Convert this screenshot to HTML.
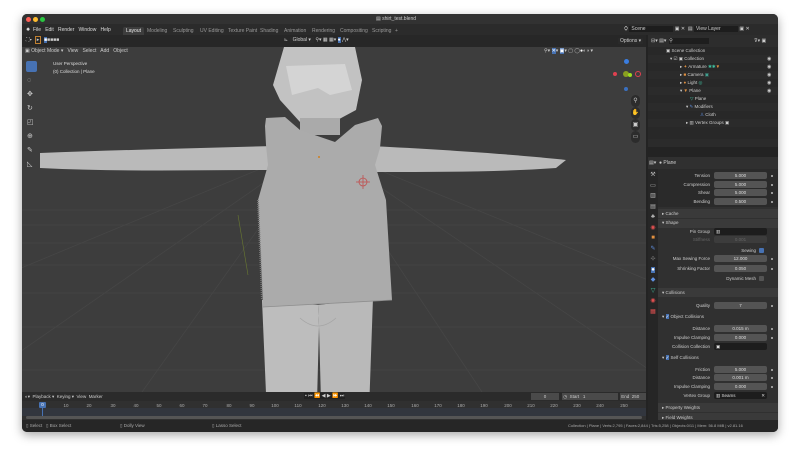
<!DOCTYPE html>
<html><head><meta charset="utf-8"><style>
*{margin:0;padding:0;box-sizing:border-box}
body{width:800px;height:459px;background:#fff;position:relative;overflow:hidden;font-family:"Liberation Sans",sans-serif;color:#ccc;font-size:5px}
.a{position:absolute;white-space:nowrap}
#win{position:absolute;left:22px;top:14px;width:756px;height:418px;background:#232323;border-radius:5px;overflow:hidden;box-shadow:0 3px 10px rgba(0,0,0,.35)}
.tab{position:absolute;top:13px;height:9px;line-height:9px;font-size:5px;color:#999}
.lab{position:absolute;width:80px;text-align:right;font-size:4.5px;color:#ccc;line-height:7px}
.fld{position:absolute;left:692px;width:53px;height:7px;background:#545454;border-radius:2px;text-align:center;font-size:4.5px;line-height:7px;color:#ddd}
.dot{position:absolute;left:749px;width:2px;height:2px;background:#bbb;border-radius:1px}
.sec{position:absolute;left:640px;font-size:4.5px;color:#ccc}
.orow{position:absolute;left:626px;width:130px;height:8px;font-size:4.5px;line-height:8px;color:#ccc}
.num{position:absolute;top:389px;font-size:4.5px;color:#aaa;width:14px;text-align:center}
</style></head><body>
<div id="win">
 <div class="a" style="left:0;top:0;width:756px;height:10px;background:#323232"></div>
 <div class="a" style="left:4px;top:3px;width:5px;height:5px;border-radius:3px;background:#fe5f57"></div>
 <div class="a" style="left:11px;top:3px;width:5px;height:5px;border-radius:3px;background:#febc2e"></div>
 <div class="a" style="left:18px;top:3px;width:5px;height:5px;border-radius:3px;background:#28c840"></div>
 <div class="a" style="left:354px;top:2px;font-size:5px;color:#ccc">▤ shirt_test.blend</div>
 <div class="a" style="left:0;top:10px;width:756px;height:11px;background:#2b2b2b"></div>
 <div class="a" style="left:4px;top:13px;font-size:5px;color:#ddd">✹ &nbsp;File &nbsp; Edit &nbsp; Render &nbsp; Window &nbsp; Help</div>
 <div class="tab" style="left:101px;background:#3d3d3d;color:#eee;padding:0 3px;border-radius:2px 2px 0 0">Layout</div>
 <div class="tab" style="left:125px">Modeling</div><div class="tab" style="left:151px">Sculpting</div>
 <div class="tab" style="left:178px">UV Editing</div><div class="tab" style="left:206px">Texture Paint</div>
 <div class="tab" style="left:238px">Shading</div><div class="tab" style="left:262px">Animation</div>
 <div class="tab" style="left:290px">Rendering</div><div class="tab" style="left:318px">Compositing</div>
 <div class="tab" style="left:350px">Scripting</div><div class="tab" style="left:373px">+</div>
 <div class="a" style="left:602px;top:12px;font-size:5px;color:#ccc">⛭ <span style="display:inline-block;width:44px;background:#1d1d1d;padding-left:2px">Scene</span> ▣ ✕ &nbsp;▤ <span style="display:inline-block;width:44px;background:#1d1d1d;padding-left:2px">View Layer</span> ▣ ✕</div>
 <div class="a" style="left:0;top:21px;width:624px;height:357px;background:#3d3d3d;overflow:hidden">
  <svg width="624" height="357" style="position:absolute;left:0;top:0">
   <g stroke="#464646" stroke-width="0.8" fill="none">
    <line x1="0" y1="175" x2="624" y2="175"/><line x1="0" y1="190" x2="624" y2="190"/>
    <line x1="0" y1="208" x2="624" y2="208"/><line x1="0" y1="230" x2="624" y2="230"/>
    <line x1="0" y1="258" x2="624" y2="258"/><line x1="0" y1="292" x2="624" y2="292"/>
    <line x1="0" y1="335" x2="624" y2="335"/>
    <line x1="296" y1="110" x2="-300" y2="357"/><line x1="296" y1="110" x2="-60" y2="357"/>
    <line x1="296" y1="110" x2="120" y2="357"/><line x1="296" y1="110" x2="460" y2="357"/>
    <line x1="296" y1="110" x2="660" y2="357"/><line x1="296" y1="110" x2="900" y2="357"/>
   </g>
   <line x1="216" y1="180" x2="226" y2="240" stroke="#6a7a30" stroke-width="0.6"/>
  </svg>
  <svg width="624" height="357" style="position:absolute;left:0;top:0">
   <g transform="translate(-22,-35)">
    <path d="M262 300 L318 305 L319 326 L316 440 L268 440 Z" fill="#bdbdbd"/>
    <path d="M318 305 L373 298 L368 440 L322 440 L319 326 Z" fill="#b9b9b9"/>
    <path d="M300 318 Q318 334 336 318" stroke="#a5a5a5" stroke-width="0.8" fill="none"/>
    <path d="M40 153 C120 150 200 148 275 146 L275 170 C200 170 120 172 40 168 Z" fill="#bababa"/>
    <path d="M370 146 C450 150 520 155 566 160 L556 168 C500 172 440 172 375 172 Z" fill="#bababa"/>
    <path d="M284 47 L355 47 L362 80 L356 110 L330 124 L300 122 L280 100 L273 85 Z" fill="#c2c2c2"/>
    <path d="M286 66 L345 64 L352 90 L330 95 L318 88 L292 95 Z" fill="#d4d4d4"/>
    <path d="M300 118 L340 118 L340 135 L300 135 Z" fill="#aaaaaa"/>
    <path d="M265 126 L266 118 L285 117 L300 130 L335 142 L355 125 L378 118 L382 126 L380 148 L375 165 L386 200 L392 300 L263 307 L258 200 L268 165 L266 145 Z" fill="#ababab"/>
    <path d="M263 307 L392 300" stroke="#8e8e8e" stroke-width="0.8"/>
    <path d="M258 200 L262 300" stroke="#777" stroke-width="2" stroke-dasharray="1 1"/>
    <circle cx="319" cy="157" r="1" fill="#d08020"/>
    <g stroke="#c05050" stroke-width="0.8" fill="none"><circle cx="363" cy="182" r="4"/><line x1="363" y1="175" x2="363" y2="189"/><line x1="356" y1="182" x2="370" y2="182"/></g>
   </g>
  </svg>
 </div>
 <div class="a" style="left:0;top:21px;width:624px;height:12px;background:rgba(35,35,35,.85)"></div>
 <div class="a" style="left:4px;top:23px;font-size:5px;color:#ccc">⛶▾ &nbsp;<span style="border:1px solid #c08030;padding:0 1px">▸</span> &nbsp;<span style="background:#4772b3;color:#fff">■</span>■■■■</div>
 <div class="a" style="left:262px;top:23px;font-size:5px;color:#ccc">⊾ <span style="background:#2a2a2a;padding:0 3px">Global ▾</span> ⚲▾ ▦ ▦▾ <span style="background:#4772b3;color:#fff">●</span> ⋀▾</div>
 <div class="a" style="left:596px;top:24px;font-size:5px;background:#2a2a2a;padding:0 2px">Options ▾</div>
 <div class="a" style="left:3px;top:34px;font-size:5px;color:#ccc">▣ Object Mode ▾ &nbsp; View &nbsp; Select &nbsp; Add &nbsp; Object</div>
 <div class="a" style="left:522px;top:34px;font-size:5px;color:#ccc">⚲▾ <span style="background:#4772b3;color:#fff">✕</span>▾ <span style="background:#4772b3;color:#fff">▣</span>▾ ▢ ◯<span style="color:#fff">●</span>◐◑ ▾</div>
 <div class="a" style="left:31px;top:46px;font-size:4.5px;color:#ddd;line-height:8px">User Perspective<br>(0) Collection | Plane</div>
 <div class="a" style="left:4px;top:47px;width:11px;height:11px;background:#4772b3;border-radius:2px"></div>
 <div class="a" style="left:5px;top:60px;font-size:7px;color:#ccc;line-height:14px">◌<br>✥<br>↻<br>◰<br>⊕<br>✎<br>◺</div>
 <div class="a" style="left:602px;top:45px;width:5px;height:5px;border-radius:3px;background:#3a7de0"></div>
 <div class="a" style="left:591px;top:58px;width:4px;height:4px;border-radius:2px;background:#e04050"></div>
 <div class="a" style="left:601px;top:57px;width:6px;height:6px;border-radius:3px;background:#8aa020"></div>
 <div class="a" style="left:606px;top:59px;width:4px;height:4px;border-radius:2px;background:#9cdc20"></div>
 <div class="a" style="left:613px;top:57px;width:6px;height:6px;border-radius:3px;border:1px solid #e04050"></div>
 <div class="a" style="left:602px;top:73px;width:4px;height:4px;border-radius:2px;background:#3a70c0"></div>
 <div class="a" style="left:609px;top:81px;width:9px;height:54px;font-size:6px;line-height:12px;color:#ccc;text-align:center"><div style="background:#2c2c2c;border-radius:5px">⚲</div><div style="background:#2c2c2c;border-radius:5px">✋</div><div style="background:#2c2c2c;border-radius:5px">▣</div><div style="background:#2c2c2c;border-radius:5px">▭</div></div>
 <div class="a" style="left:624px;top:21px;width:2px;height:397px;background:#232323"></div>
 <div class="a" style="left:626px;top:21px;width:130px;height:12px;background:#2d2d2d"></div>
 <div class="a" style="left:629px;top:24px;font-size:5px">⊟▾ ▤▾ &nbsp;<span style="display:inline-block;width:40px;background:#1e1e1e">⚲</span></div>
 <div class="a" style="left:732px;top:24px;font-size:5px">⊽▾ ▣</div>
 <div class="a" style="left:626px;top:33px;width:130px;height:92px;background:#282828"></div>
 <div class="orow" style="top:33px;padding-left:18px">▣ Scene Collection</div>
 <div class="orow" style="top:41px;background:#2b2b2b;padding-left:22px">▾ ☑ ▣ Collection</div>
 <div class="orow" style="top:49px;padding-left:32px">▸ <span style="color:#e09040">✦</span> Armature <span style="color:#40c0a0">✱✱</span><span style="color:#e09040">▼</span></div>
 <div class="orow" style="top:57px;background:#2b2b2b;padding-left:32px">▸ <span style="color:#e09040">■</span> Camera <span style="color:#40a090">▣</span></div>
 <div class="orow" style="top:65px;padding-left:32px">▸ <span style="color:#e09040">●</span> Light <span style="color:#40c0a0">◎</span></div>
 <div class="orow" style="top:73px;background:#2b2b2b;padding-left:32px">▾ <span style="color:#e09040">▼</span> Plane</div>
 <div class="orow" style="top:81px;padding-left:42px"><span style="color:#40c0a0">▽</span> Plane</div>
 <div class="orow" style="top:89px;background:#2b2b2b;padding-left:38px">▾ <span style="color:#6090e0">✎</span> Modifiers</div>
 <div class="orow" style="top:97px;padding-left:52px"><span style="color:#6090e0">♙</span> Cloth</div>
 <div class="orow" style="top:105px;background:#2b2b2b;padding-left:38px">▸ ▥ Vertex Groups ▣</div>
 <div class="a" style="left:745px;top:41px;font-size:5px;line-height:8px;color:#ccc">◉<br>◉<br>◉<br>◉<br>◉</div>
 <div class="a" style="left:626px;top:125px;width:130px;height:8px;background:#2b2b2b"></div>
 <div class="a" style="left:626px;top:141px;width:130px;height:2px;background:#232323"></div>
 <div class="a" style="left:626px;top:143px;width:130px;height:275px;background:#303030"></div>
 <div class="a" style="left:626px;top:155px;width:10px;height:263px;background:#262626"></div>
 <div class="a" style="left:627px;top:156px;font-size:6px;line-height:10.5px;color:#bbb;text-align:center;width:8px">⚒<br>▭<br>▥<br>▤<br>♣<br><span style="color:#e05050">◉</span><br><span style="color:#e09040">■</span><br><span style="color:#6090e0">✎</span><br>⊹<br><span style="background:#4772b3;color:#fff">●</span><br><span style="color:#6090e0">◆</span><br><span style="color:#40c0a0">▽</span><br><span style="color:#e05050">◉</span><br><span style="color:#e05050">▦</span></div>
 <div class="a" style="left:627px;top:146px;font-size:5px">▤▾ &nbsp;● Plane</div>
 <div class="a" style="left:636px;top:155px;width:120px;height:38px;background:#2a2a2a"></div>
 <div class="lab" style="left:608px;top:158px">Tension</div><div class="fld" style="top:158px">5.000</div><div class="dot" style="top:161px"></div>
 <div class="lab" style="left:608px;top:167px">Compression</div><div class="fld" style="top:167px">5.000</div><div class="dot" style="top:170px"></div>
 <div class="lab" style="left:608px;top:175px">Shear</div><div class="fld" style="top:175px">5.000</div><div class="dot" style="top:178px"></div>
 <div class="lab" style="left:608px;top:184px">Bending</div><div class="fld" style="top:184px">0.500</div><div class="dot" style="top:187px"></div>
 <div class="a" style="left:636px;top:195px;width:120px;height:9px;background:#3a3a3a"></div>
 <div class="sec" style="top:197px">▸ Cache</div>
 <div class="a" style="left:636px;top:205px;width:120px;height:9px;background:#3a3a3a"></div>
 <div class="sec" style="top:206px">▾ Shape</div>
 <div class="lab" style="left:608px;top:214px">Pin Group</div><div class="fld" style="top:214px;background:#1d1d1d;text-align:left;padding-left:2px">▥</div>
 <div class="lab" style="left:608px;top:222px;color:#666">Stiffness</div><div class="fld" style="top:222px;background:#3c3c3c;color:#666">0.001</div>
 <div class="lab" style="left:654px;top:233px">Sewing</div><div class="a" style="left:737px;top:234px;width:5px;height:5px;background:#4772b3;border-radius:1px"></div>
 <div class="lab" style="left:608px;top:241px">Max Sewing Force</div><div class="fld" style="top:241px">12.000</div><div class="dot" style="top:244px"></div>
 <div class="lab" style="left:608px;top:251px">Shrinking Factor</div><div class="fld" style="top:251px">0.050</div><div class="dot" style="top:254px"></div>
 <div class="lab" style="left:654px;top:261px">Dynamic Mesh</div><div class="a" style="left:737px;top:262px;width:5px;height:5px;background:#545454;border-radius:1px"></div>
 <div class="a" style="left:636px;top:274px;width:120px;height:9px;background:#3a3a3a"></div>
 <div class="sec" style="top:276px">▾ Collisions</div>
 <div class="lab" style="left:608px;top:288px">Quality</div><div class="fld" style="top:288px">7</div><div class="dot" style="top:291px"></div>
 <div class="sec" style="top:300px">▾ <span style="background:#4772b3;color:#fff">✓</span> Object Collisions</div>
 <div class="lab" style="left:608px;top:311px">Distance</div><div class="fld" style="top:311px">0.015 m</div><div class="dot" style="top:314px"></div>
 <div class="lab" style="left:608px;top:320px">Impulse Clamping</div><div class="fld" style="top:320px">0.000</div><div class="dot" style="top:323px"></div>
 <div class="lab" style="left:608px;top:329px">Collision Collection</div><div class="fld" style="top:329px;background:#1d1d1d;text-align:left;padding-left:2px">▣</div>
 <div class="sec" style="top:341px">▾ <span style="background:#4772b3;color:#fff">✓</span> Self Collisions</div>
 <div class="lab" style="left:608px;top:352px">Friction</div><div class="fld" style="top:352px">5.000</div><div class="dot" style="top:355px"></div>
 <div class="lab" style="left:608px;top:360px">Distance</div><div class="fld" style="top:360px">0.001 m</div><div class="dot" style="top:363px"></div>
 <div class="lab" style="left:608px;top:369px">Impulse Clamping</div><div class="fld" style="top:369px">0.000</div><div class="dot" style="top:372px"></div>
 <div class="lab" style="left:608px;top:378px">Vertex Group</div><div class="fld" style="top:378px;background:#1d1d1d;text-align:left;padding-left:2px">▥ Seams<span style="float:right;padding-right:2px">✕</span></div>
 <div class="a" style="left:636px;top:389px;width:120px;height:9px;background:#3a3a3a"></div>
 <div class="sec" style="top:391px">▸ Property Weights</div>
 <div class="a" style="left:636px;top:399px;width:120px;height:9px;background:#3a3a3a"></div>
 <div class="sec" style="top:401px">▸ Field Weights</div>
 <div class="a" style="left:0;top:378px;width:624px;height:9px;background:#2b2b2b"></div>
 <div class="a" style="left:3px;top:380px;font-size:4.5px;color:#ccc">◐▾ &nbsp;Playback ▾ &nbsp;Keying ▾ &nbsp;View &nbsp;Marker</div>
 <div class="a" style="left:282px;top:379px;font-size:5px;color:#ccc;background:#222;padding:0 1px">▪ ⏮ ⏪ ◀ ▶ ⏩ ⏭</div>
 <div class="a" style="left:509px;top:379px;width:28px;height:7px;background:#4a4a4a;font-size:4.5px;text-align:center;line-height:7px">0</div>
 <div class="a" style="left:540px;top:379px;width:56px;height:7px;background:#4a4a4a;font-size:4.5px;line-height:7px">&nbsp;◷ &nbsp;Start &nbsp; 1</div>
 <div class="a" style="left:598px;top:379px;width:26px;height:7px;background:#4a4a4a;font-size:4.5px;line-height:7px">&nbsp;End &nbsp;250</div>
 <div class="a" style="left:0;top:387px;width:624px;height:19px;background:#303030"></div>
 <div class="a" style="left:0;top:394px;width:624px;height:8px;background:#333a48;opacity:.6"></div>
 <div class="a" style="left:17px;top:388px;width:7px;height:6px;background:#4772b3;border-radius:1px;font-size:4.5px;color:#fff;text-align:center;line-height:6px">0</div>
 <div class="a" style="left:20px;top:394px;width:1px;height:8px;background:#4772b3"></div>
 <div class="num" style="left:37px">10</div><div class="num" style="left:60px">20</div><div class="num" style="left:84px">30</div><div class="num" style="left:107px">40</div><div class="num" style="left:130px">50</div><div class="num" style="left:153px">60</div><div class="num" style="left:176px">70</div><div class="num" style="left:200px">80</div><div class="num" style="left:223px">90</div><div class="num" style="left:246px">100</div><div class="num" style="left:269px">110</div><div class="num" style="left:293px">120</div><div class="num" style="left:316px">130</div><div class="num" style="left:339px">140</div><div class="num" style="left:362px">150</div><div class="num" style="left:386px">160</div><div class="num" style="left:409px">170</div><div class="num" style="left:432px">180</div><div class="num" style="left:455px">190</div><div class="num" style="left:479px">200</div><div class="num" style="left:502px">210</div><div class="num" style="left:525px">220</div><div class="num" style="left:548px">230</div><div class="num" style="left:571px">240</div><div class="num" style="left:595px">250</div>
 <div class="a" style="left:4px;top:402px;width:616px;height:3px;background:#555;border-radius:2px"></div>
 <div class="a" style="left:0;top:406px;width:756px;height:12px;background:#262626"></div>
 <div class="a" style="left:4px;top:409px;font-size:4.5px;color:#aaa">▯ Select &nbsp; ▯ Box Select</div>
 <div class="a" style="left:98px;top:409px;font-size:4.5px;color:#aaa">▯ Dolly View</div>
 <div class="a" style="left:190px;top:409px;font-size:4.5px;color:#aaa">▯ Lasso Select</div>
 <div class="a" style="left:546px;top:409px;font-size:4px;color:#aaa">Collection | Plane | Verts:2,795 | Faces:2,844 | Tris:5,258 | Objects:0/11 | Mem: 56.8 MiB | v2.81.16</div>
</div>
</body></html>
